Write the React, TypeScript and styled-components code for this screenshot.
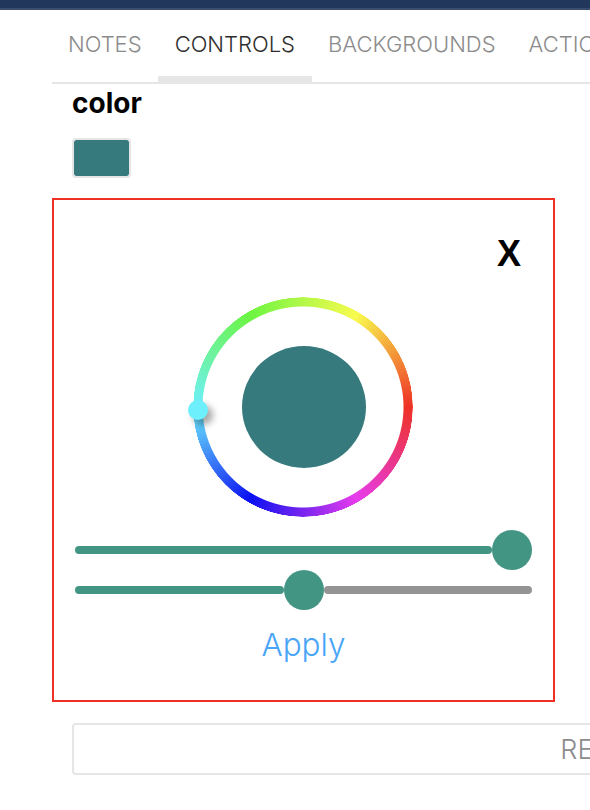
import React from 'react'
import styled, { createGlobalStyle } from 'styled-components'

const GlobalStyle = createGlobalStyle`
  html, body {
    margin: 0;
    padding: 0;
    background: #fff;
    overflow: hidden;
  }
  body {
    font-family: Inter, "Liberation Sans", sans-serif;
  }
`

const Page = styled.div`
  width: 590px;
  height: 810px;
  overflow: hidden;
`

const TopBar = styled.div`
  height: 8px;
  background: #22375c;
  border-bottom: 2px solid #3b4d6f;
`

const Content = styled.div`
  padding-left: 52px;
`

const Tabs = styled.div`
  display: flex;
  width: 538px;
  height: 72px;
  border-bottom: 2px solid #e6e6e6;
  overflow: hidden;
`

const Tab = styled.div<{ $active?: boolean }>`
  flex: none;
  box-sizing: border-box;
  height: 72px;
  padding: 20px 16.5px 0;
  font-size: 22px;
  line-height: 28px;
  font-weight: 300;
  white-space: nowrap;
  color: ${(p) => (p.$active ? '#2e2e2e' : '#8c8c8c')};
  border-bottom: 6px solid ${(p) => (p.$active ? '#e6e6e6' : 'transparent')};

  &:first-child {
    padding-left: 16px;
  }
`

const ControlLabel = styled.div`
  margin: 2px 0 0 20px;
  font-size: 28px;
  line-height: 34px;
  font-weight: 700;
  color: #000;
`

const Swatch = styled.div`
  box-sizing: border-box;
  width: 59px;
  height: 40px;
  margin: 18px 0 0 20px;
  border: 2px solid #e6e6e6;
  border-radius: 4px;
  background: #367a7e;
  background-clip: padding-box;
`

const PickerPanel = styled.div`
  box-sizing: border-box;
  width: 503px;
  height: 504px;
  margin-top: 20px;
  border: 2px solid #ee3124;
  padding: 0 21px;
  display: flex;
  flex-direction: column;
  align-items: center;
`

const CloseRow = styled.div`
  align-self: stretch;
  display: flex;
  justify-content: flex-end;
  margin-right: 11px;
  padding-top: 33px;
  height: 97px;
  box-sizing: border-box;
  font-size: 36px;
  line-height: 42px;
  font-weight: 700;
  font-family: "Liberation Sans", sans-serif;
  color: #000;
`

const WheelWrap = styled.div`
  position: relative;
  width: 220px;
  height: 220px;
  margin-right: 1px;
  display: flex;
  align-items: center;
  justify-content: center;
`

const Ring = styled.div`
  position: absolute;
  inset: 0;
  border-radius: 50%;
  background: conic-gradient(
    from 90deg,
    #ee3124 0deg,
    #e73cec 60deg,
    #0a10f2 120deg,
    #6ef0fc 180deg,
    #6cf542 240deg,
    #f8fb4e 300deg,
    #ee3124 360deg
  );
  -webkit-mask: radial-gradient(closest-side, transparent calc(100% - 10px), #000 calc(100% - 9px), #000 calc(100% - 0.5px), transparent 100%);
  mask: radial-gradient(closest-side, transparent calc(100% - 10px), #000 calc(100% - 9px), #000 calc(100% - 0.5px), transparent 100%);
`

const Preview = styled.div`
  width: 124px;
  height: 122px;
  margin-left: 1px;
  border-radius: 50%;
  background: #367a7e;
`

const HueThumb = styled.div`
  position: absolute;
  left: -5px;
  top: 103px;
  width: 20px;
  height: 20px;
  border-radius: 50%;
  background: #6ef0fc;
  box-shadow: 5px 5px 7px rgba(0, 0, 0, 0.35);
`

const Sliders = styled.div`
  align-self: stretch;
  margin-top: 13px;
  display: flex;
  flex-direction: column;
`

const SliderRow = styled.div`
  display: flex;
  align-items: center;
  height: 40px;
  width: 457px;
`

const Track = styled.div<{ $filled?: boolean }>`
  height: 8px;
  border-radius: 4px;
  background: ${(p) => (p.$filled ? '#429583' : '#949494')};
`

const Thumb = styled.div`
  flex: none;
  width: 40px;
  height: 40px;
  border-radius: 50%;
  background: #429583;
`

const ApplyLink = styled.div`
  margin-top: 16px;
  font-size: 31.5px;
  line-height: 38px;
  font-weight: 300;
  color: #4aa5f8;
`

const ResetBox = styled.div`
  box-sizing: border-box;
  width: 1060px;
  height: 52px;
  margin: 21px 0 0 20px;
  border: 2px solid #e6e6e6;
  border-radius: 4px;
  display: flex;
  align-items: center;
  justify-content: center;
  font-size: 27px;
  font-weight: 300;
  color: #8c8c8c;
`

const tabNames = ['NOTES', 'CONTROLS', 'BACKGROUNDS', 'ACTIONS']

const Slider = ({ before, after }: { before: number; after: number }) => (
  <SliderRow>
    <Track $filled style={{ width: before }} />
    <Thumb />
    {after > 0 && <Track style={{ width: after }} />}
  </SliderRow>
)

export default function App() {
  return (
    <Page>
      <GlobalStyle />
      <TopBar />
      <Content>
        <Tabs>
          {tabNames.map((name) => (
            <Tab key={name} $active={name === 'CONTROLS'}>
              {name}
            </Tab>
          ))}
        </Tabs>
        <ControlLabel>color</ControlLabel>
        <Swatch />
        <PickerPanel>
          <CloseRow>X</CloseRow>
          <WheelWrap>
            <Ring />
            <Preview />
            <HueThumb />
          </WheelWrap>
          <Sliders>
            <Slider before={417} after={0} />
            <Slider before={209} after={208} />
          </Sliders>
          <ApplyLink>Apply</ApplyLink>
        </PickerPanel>
        <ResetBox>RESET</ResetBox>
      </Content>
    </Page>
  )
}
